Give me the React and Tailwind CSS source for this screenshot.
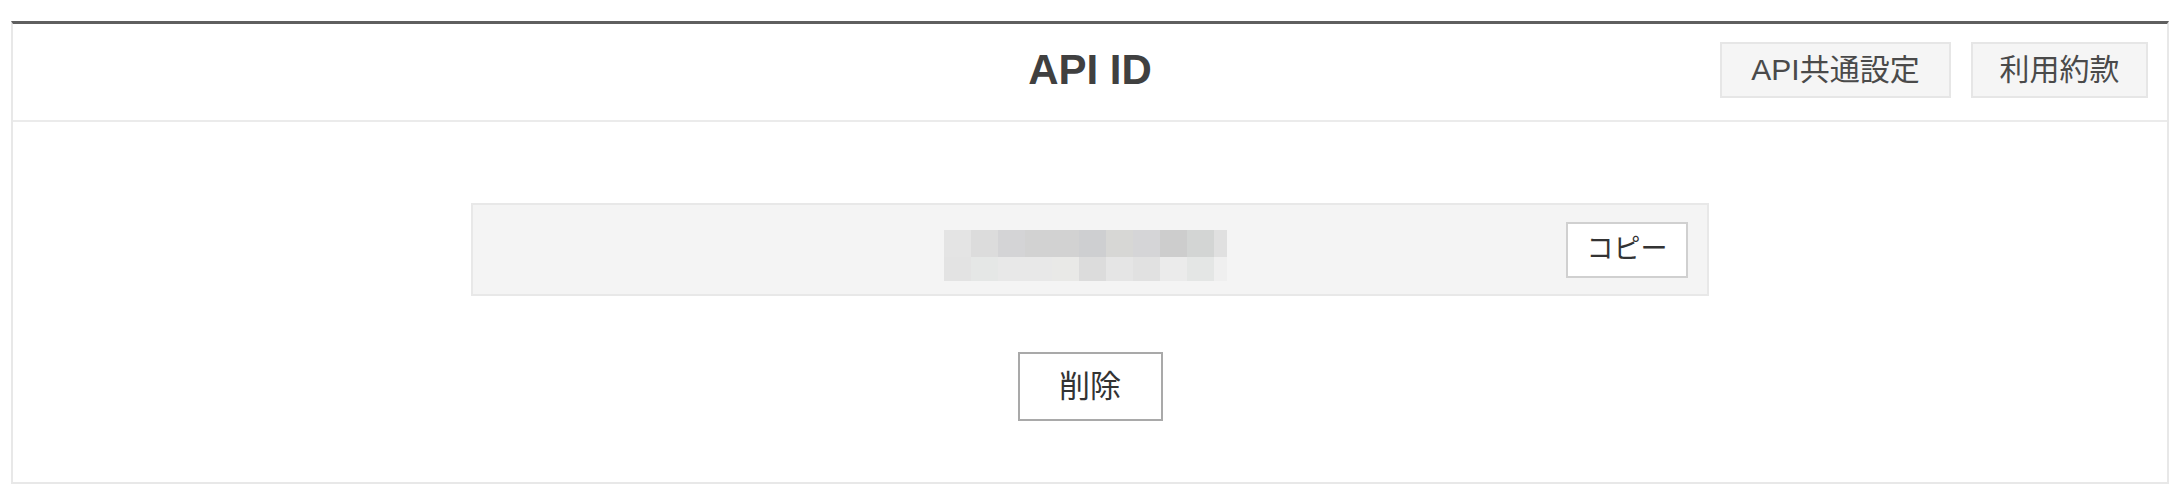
import React from 'react'

const font = { fontFamily: '"Liberation Sans", "Noto Sans CJK JP", sans-serif' }

// pixelated placeholder for the masked ID
const topRow = ['#e4e4e4', '#dcdcdc', '#d4d4d6', '#d2d2d2', '#d2d2d2', '#cecfd1', '#d7d7d5', '#d5d5d7', '#cdcdcd', '#d3d5d4', '#e0e0e0']
const bottomRow = ['#e3e3e3', '#e5e7e6', '#e8e8e8', '#e8e8e8', '#e9e9e7', '#dcdcdc', '#e5e5e5', '#e1e1e1', '#ebebeb', '#e4e6e5', '#efefef']

function MaskedId() {
  return (
    <div className="flex flex-col mt-[12px]">
      <div className="flex">
        {topRow.map((c, i) => (
          <div key={i} className={i === 10 ? 'w-[13px] h-[27px]' : 'w-[27px] h-[27px]'} style={{ backgroundColor: c }} />
        ))}
      </div>
      <div className="flex">
        {bottomRow.map((c, i) => (
          <div key={i} className={i === 10 ? 'w-[13px] h-[24px]' : 'w-[27px] h-[24px]'} style={{ backgroundColor: c }} />
        ))}
      </div>
    </div>
  )
}

export default function App() {
  return (
    <div className="bg-white w-[2179px] h-[502px] pl-[11px] pr-[10px] pt-[21px]" style={font}>
      <div className="border-t-[3px] border-t-[#5f5f5f] border-x-2 border-x-[#e8e8e8] border-b-2 border-b-[#e8e8e8]">
        {/* Header */}
        <div className="grid grid-cols-[1fr_auto_1fr] items-center h-[98px] pb-[4px] border-b-2 border-[#ebebeb]">
          <div />
          <h1 className="text-[42px] font-bold text-[#404040] leading-none">API ID</h1>
          <div className="flex justify-end gap-[20px] pr-[19px]">
            <button className="h-[56px] w-[231px] bg-[#f5f5f5] border-2 border-[#e6e6e6] text-[30px] text-[#4a4a4a] leading-none">
              API共通設定
            </button>
            <button className="h-[56px] w-[177px] bg-[#f5f5f5] border-2 border-[#e6e6e6] text-[30px] text-[#4a4a4a] leading-none">
              利用約款
            </button>
          </div>
        </div>

        {/* Body */}
        <div className="flex flex-col items-center pt-[81px] pb-[61px]">
          <div className="w-[1238px] h-[93px] bg-[#f4f4f4] border-2 border-[#e8e8e8] grid grid-cols-[1fr_auto_1fr] items-center pr-[10px]">
            <div />
            <MaskedId />
            <div className="flex justify-end pr-[9px]">
              <button className="h-[56px] w-[122px] bg-white border-2 border-[#d0d0d0] text-[27px] text-[#333] leading-none">
                コピー
              </button>
            </div>
          </div>
          <button className="mt-[56px] h-[69px] w-[145px] bg-white border-2 border-[#a9a9a9] text-[31px] text-[#333] leading-none">
            削除
          </button>
        </div>
      </div>
    </div>
  )
}
